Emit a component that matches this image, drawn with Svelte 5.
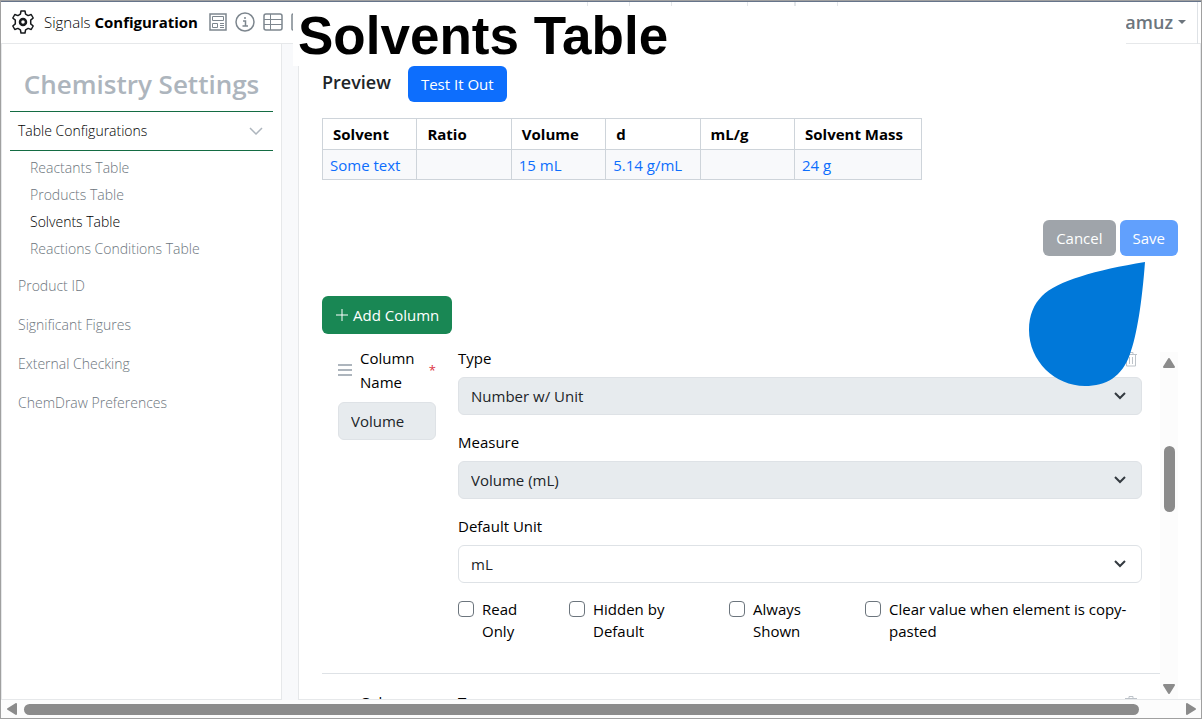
<script>
   const tables = ["Reactants Table", "Products Table", "Solvents Table", "Reactions Conditions Table"];
   const sections = ["Product ID", "Significant Figures", "External Checking", "ChemDraw Preferences"];

   const preview = [
      { title: "Solvent", value: "Some text" },
      { title: "Ratio", value: "" },
      { title: "Volume", value: "15 mL" },
      { title: "d", value: "5.14 g/mL" },
      { title: "mL/g", value: "" },
      { title: "Solvent Mass", value: "24 g" },
   ];

   const flags = ["Read Only", "Hidden by Default", "Always Shown", "Clear value when element is copy-pasted"];

   const columns = [
      {
         name: "Volume",
         fields: [
            { label: "Type", value: "Number w/ Unit", locked: true },
            { label: "Measure", value: "Volume (mL)", locked: true },
            { label: "Default Unit", value: "mL", locked: false },
         ],
      },
      {
         name: "",
         fields: [
            { label: "Type", value: "", locked: true },
         ],
      },
   ];

   let current = "Solvents Table";
</script>

<div class="window">
   <header class="topbar">
      <svg class="gear" viewBox="0 0 24 24" aria-hidden="true">
         <path d="M10 1h4l.6 3.200 2.500 1.400 3.100-1.100 2 3.500-2.500 2.100v3.800l2.500 2.100-2 3.500-3.100-1.100-2.500 1.400L14 23h-4l-.6-3.200-2.500-1.400-3.100 1.100-2-3.500 2.500-2.100v-3.800L1.800 8l2-3.500 3.100 1.100 2.500-1.400z" />
         <circle class="hub" cx="12" cy="12" r="3" />
      </svg>
      <span class="brand">Signals <b>Configuration</b></span>

      <nav class="tools" aria-label="Tools">
         <button class="tool" aria-label="News">
            <svg width="18" height="18" viewBox="0 0 18 18">
               <rect class="bold" x="1" y="1" width="16" height="16" />
               <path d="M3.500 3.500h11v4h-11zM11 10.500h4M11 12.500h4M11 14.500h4M3.500 10.500h5v4h-5z" />
            </svg>
         </button>
         <button class="tool" aria-label="Information">
            <svg width="20" height="20" viewBox="0 0 20 20">
               <circle class="bold" cx="10" cy="10" r="9" />
               <path class="bold" d="M8 9h2.500v5M7.500 14h5.500M9 6h2" />
            </svg>
         </button>
         <button class="tool" aria-label="Table">
            <svg width="20" height="18" viewBox="0 0 20 18">
               <rect class="bold" x="1" y="1" width="18" height="16" rx="2" />
               <path d="M1 6.500h18M1 11.500h18M7.500 1v16" />
            </svg>
         </button>
         <button class="tool" aria-label="More">
            <svg width="18" height="18" viewBox="0 0 18 18"><rect class="bold" x="1" y="1" width="16" height="16" rx="1" /></svg>
         </button>
      </nav>

      <button class="user">amuz<span class="caret"></span></button>

      <svg class="ticks" width="252" height="4" viewBox="0 0 252 4" aria-hidden="true">
         <path d="M.5 0v4M42.500 0v4M84.500 0v4M160.500 0v4M207.500 0v4M208.500 0v4M250.500 0v4" />
      </svg>
      <h1 class="caption">Solvents Table</h1>
   </header>

   <div class="body">
      <aside class="sidebar">
         <h2>Chemistry Settings</h2>
         <button class="group">
            Table Configurations
            <svg width="14" height="8" viewBox="0 0 14 8"><path d="M1 1l6 6 6-6" /></svg>
         </button>
         <ul class="tables">
            {#each tables as table}
               <li><a href="#table" class:current={table == current}>{table}</a></li>
            {/each}
         </ul>
         <ul class="sections">
            {#each sections as section}
               <li><a href="#section">{section}</a></li>
            {/each}
         </ul>
      </aside>

      <main>
         <div class="heading">
            <h3>Preview</h3>
            <button class="btn primary">Test It Out</button>
         </div>

         <table>
            <thead>
               <tr>
                  {#each preview as col}<th>{col.title}</th>{/each}
               </tr>
            </thead>
            <tbody>
               <tr>
                  {#each preview as col}<td>{col.value}</td>{/each}
               </tr>
            </tbody>
         </table>

         <div class="actions">
            <button class="btn secondary" disabled>Cancel</button>
            <button class="btn primary" disabled>Save</button>
            <svg class="pointer" viewBox="0 0 118 126" aria-hidden="true">
               <path d="M117 1C114 41 109 74 102 93C94 116 78 125 57 125C27 125 1 100 1 69C1 54 6 43 14 35C29 20 68 9 117 1z" />
            </svg>
         </div>

         <button class="btn success">
            <svg width="14" height="14" viewBox="0 0 14 14"><path d="M7 1v12M1 7h12" /></svg>
            Add Column
         </button>

         <div class="scroller">
            <div class="list">
               {#each columns as column, i}
                  <section class="column">
                     <div class="name">
                        <div class="name-head">
                           <svg width="14" height="14" viewBox="0 0 14 14"><path d="M0 2h14M0 7h14M0 12h14" /></svg>
                           <label for="name-{i}">Column Name</label>
                           <span class="required">*</span>
                        </div>
                        <input id="name-{i}" type="text" value={column.name} disabled />
                     </div>

                     <div class="fields">
                        <button class="trash" aria-label="Delete column">
                           <svg width="14" height="16" viewBox="0 0 14 16">
                              <path d="M1 3.500h12M5 3V1.500h4V3M2.500 4v11h9V4M5.500 6v7M8.500 6v7" />
                           </svg>
                        </button>
                        {#each column.fields as field, j}
                           <div class="field">
                              <label for="field-{i}-{j}">{field.label}</label>
                              <div class="select">
                                 <select id="field-{i}-{j}" disabled={field.locked}>
                                    <option>{field.value}</option>
                                 </select>
                                 <svg width="12" height="8" viewBox="0 0 12 8"><path d="M1 1l5 5 5-5" /></svg>
                              </div>
                           </div>
                        {/each}
                        {#if column.fields.length > 1}
                           <div class="flags">
                              {#each flags as flag}
                                 <label><input type="checkbox" /><span>{flag}</span></label>
                              {/each}
                           </div>
                        {/if}
                     </div>
                  </section>
               {/each}
            </div>

            <div class="vbar" aria-hidden="true">
               <svg width="12" height="10" viewBox="0 0 12 10"><path d="M6 1l5 8H1z" /></svg>
               <div class="vtrack"><div class="vthumb"></div></div>
               <svg width="12" height="10" viewBox="0 0 12 10"><path d="M6 9L1 1h10z" /></svg>
            </div>
         </div>
      </main>
   </div>

   <div class="hbar" aria-hidden="true">
      <svg width="10" height="12" viewBox="0 0 10 12"><path d="M1 6l8-5v10z" /></svg>
      <div class="htrack"><div class="hthumb"></div></div>
      <svg width="10" height="12" viewBox="0 0 10 12"><path d="M9 6L1 1v10z" /></svg>
   </div>
</div>

<style>
   :global(body) {
      background: #fff;
      overflow: hidden;
   }

   .window, .window * {
      box-sizing: border-box;
   }

   .window {
      display: flex;
      flex-direction: column;
      height: 100vh;
      border: 1px solid #a0a0a0;
      background: #fff;
      color: #000;
      font: 15px/24px "Open Sans", "Noto Sans", sans-serif;
   }

   svg {
      display: block;
      flex: none;
      fill: none;
      stroke: currentColor;
   }

   h1, h2, h3, ul {
      margin: 0;
      padding: 0;
      list-style: none;
   }

   button {
      font: inherit;
      border: 0;
      padding: 0;
      background: none;
      color: inherit;
   }

   a {
      color: inherit;
      text-decoration: none;
   }

/* top bar */
   .topbar {
      position: relative;
      display: flex;
      flex: none;
      align-items: center;
      height: 43px;
      padding: 0 3px 2px 10px;
      border-top: 1px solid #66748a;
      border-bottom: 1px solid #e6e8ea;
   }

   .gear {
      width: 24px;
      height: 24px;
      margin-right: 9px;
      color: #16191c;
      stroke-width: 1.5;
      stroke-linejoin: round;
   }

   .gear .hub {
      stroke-width: 2.5;
   }

   .brand {
      font-size: 15px;
      font-weight: 300;
      white-space: nowrap;
   }

   .brand b {
      font-weight: 700;
   }

   .tools {
      display: flex;
      align-items: center;
      gap: 8px;
      margin-left: 11px;
      color: #7d868e;
   }

   .tool .bold {
      stroke-width: 1.5;
   }

   .user {
      display: flex;
      align-items: center;
      gap: 5px;
      height: 42px;
      margin: 0 0 -2px auto;
      padding: 0 11px 2px 0;
      border-right: 1px solid #dee2e6;
      color: #6c757d;
      font-size: 18px;
      font-weight: 600;
   }

   .caret {
      border: 4px solid transparent;
      border-top-color: currentColor;
      border-bottom: 0;
   }

   .ticks {
      position: absolute;
      top: 0;
      left: 586px;
      color: #e3e6e9;
   }

   .caption {
      position: absolute;
      z-index: 2;
      top: 4px;
      left: 292px;
      right: 75px;
      height: 60px;
      padding-left: 5px;
      background: #fff;
      font: bold 53px/60px "Liberation Sans", Arial, sans-serif;
   }

/* page body */
   .body {
      display: flex;
      flex: 1;
      gap: 16px;
      min-height: 0;
      background: #f8f9fb;
   }

   .sidebar {
      flex: none;
      width: 281px;
      padding: 22px 8px 0;
      border: 1px solid #e6e8ea;
      border-top: 0;
      background: #fff;
      color: #6c757d;
      font-size: 14px;
      font-weight: 300;
   }

   .sidebar h2 {
      height: 45px;
      color: #adb5bd;
      font-size: 26px;
      font-weight: 600;
      line-height: 36px;
      text-align: center;
      white-space: nowrap;
   }

   .group {
      display: flex;
      align-items: center;
      justify-content: space-between;
      width: 100%;
      height: 40px;
      padding: 0 10px 0 8px;
      border-top: 1px solid #146c43;
      border-bottom: 1px solid #146c43;
      color: #000;
   }

   .group svg {
      color: #adb5bd;
      stroke-width: 1.5;
   }

   .tables {
      display: grid;
      gap: 3px;
      padding: 5px 0 0 20px;
   }

   .tables .current {
      color: #000;
   }

   .sections {
      display: grid;
      gap: 15px;
      padding: 13px 0 0 8px;
   }

   main {
      display: flex;
      flex: 1;
      flex-direction: column;
      align-items: flex-start;
      min-width: 0;
      padding: 22px 22px 0 23px;
      border: 1px solid #e6e8ea;
      border-top: 0;
      background: #fff;
   }

   .heading {
      display: flex;
      gap: 17px;
   }

   .heading h3 {
      color: #212529;
      font-size: 18px;
      font-weight: 600;
      line-height: 32px;
   }

   .btn {
      display: flex;
      align-items: center;
      height: 36px;
      padding: 0 13px;
      border-radius: 6px;
      color: #fff;
   }

   .primary {
      background: #0d6efd;
   }

   .secondary {
      background: #6c757d;
   }

   .btn:disabled {
      opacity: .65;
   }

   .success {
      gap: 4px;
      height: 38px;
      margin-top: 40px;
      background: #198754;
   }

   table {
      width: 600px;
      margin-top: 16px;
      border-collapse: collapse;
      table-layout: fixed;
   }

   th, td {
      height: 30px;
      padding: 0 7px;
      border: 1px solid #ced4da;
      line-height: 24px;
      text-align: left;
   }

   th {
      height: 31px;
      padding: 0 10px;
      font-weight: 700;
   }

   th:last-child {
      width: 127px;
   }

   td {
      background: #f8f9fb;
      color: #0d6efd;
   }

   .actions {
      position: relative;
      display: flex;
      gap: 4px;
      margin-top: 40px;
      align-self: flex-end;
   }

   .pointer {
      position: absolute;
      z-index: 1;
      top: 41px;
      right: 32px;
      width: 118px;
      height: 126px;
      fill: #0078d9;
      stroke: none;
   }

/* list of columns */
   .scroller {
      display: flex;
      flex: 1;
      align-self: stretch;
      min-height: 0;
      margin-top: 12px;
   }

   .list {
      flex: 1;
      overflow: hidden;
   }

   .column {
      display: grid;
      grid-template-columns: 98px 1fr;
      gap: 22px;
      padding: 16px 18px 31px 16px;
      border-bottom: 1px solid #dee2e6;
   }

   .column:first-child {
      padding-top: 0;
   }

   .name-head {
      display: flex;
      align-items: center;
      gap: 8px;
      margin-bottom: 8px;
   }

   .name-head svg {
      color: #adb5bd;
      stroke-width: 2;
   }

   .required {
      margin-left: auto;
      color: #dc3545;
      font-size: 13px;
   }

   .name input, select {
      display: block;
      width: 100%;
      height: 38px;
      padding: 0 12px;
      border: 1px solid #dee2e6;
      border-radius: 6px;
      background: #fff;
      color: #212529;
      font: inherit;
      appearance: none;
   }

   .name input:disabled, select:disabled {
      background: #e7ebee;
      opacity: 1;
   }

   .fields {
      position: relative;
      display: grid;
      gap: 15px;
   }

   .trash {
      position: absolute;
      top: 5px;
      right: 4px;
      color: #bdc3c9;
   }

   .field {
      display: grid;
      gap: 7px;
   }

   .select {
      position: relative;
   }

   .select svg {
      position: absolute;
      top: 15px;
      right: 16px;
      color: #343a40;
      stroke-width: 2;
      pointer-events: none;
   }

   .flags {
      display: grid;
      grid-template-columns: 111fr 160fr 136fr 277fr;
      line-height: 22px;
   }

   .flags label {
      display: flex;
      align-items: flex-start;
      gap: 8px;
      padding-right: 24px;
   }

   .flags label:last-child {
      padding-right: 8px;
   }

   .flags input {
      flex: none;
      width: 16px;
      height: 16px;
      margin: 3px 0;
      border: 1px solid #6c757d;
      border-radius: 4px;
      appearance: none;
   }

/* scroll bars */
   .vbar {
      display: flex;
      flex: none;
      flex-direction: column;
      align-items: center;
      width: 18px;
      margin-top: 6px;
      padding: 6px 0 5px;
      background: #fcfcfc;
   }

   .vbar svg, .hbar svg {
      fill: #8b8b8b;
      stroke: #8b8b8b;
      stroke-width: 2;
      stroke-linejoin: round;
   }

   .vtrack {
      display: grid;
      grid-template-rows: 78fr 66fr 171fr;
      flex: 1;
      width: 11px;
   }

   .vthumb {
      grid-row: 2;
      border-radius: 6px;
      background: #8b8b8b;
   }

   .hbar {
      display: flex;
      flex: none;
      align-items: center;
      gap: 7px;
      height: 18px;
      padding: 0 5px 0 6px;
      background: #fcfcfc;
   }

   .htrack {
      display: grid;
      grid-template-columns: 1115fr 40fr;
      flex: 1;
   }

   .hthumb {
      height: 11px;
      border-radius: 6px;
      background: #8b8b8b;
   }
</style>
